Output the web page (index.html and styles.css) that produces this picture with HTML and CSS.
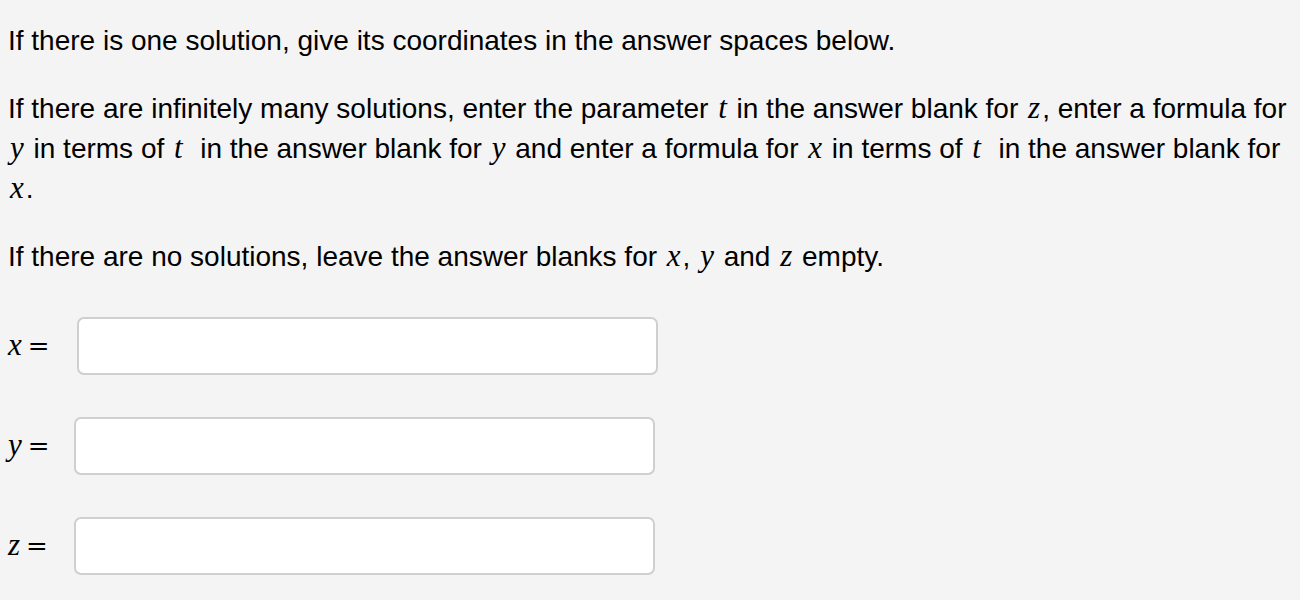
FILE: index.html
```html
<!DOCTYPE html>
<html>
<head>
<meta charset="utf-8">
<link rel="stylesheet" href="styles.css">
</head>
<body>
<div class="page">
  <p class="para">If there is one solution, give its coordinates in the answer spaces below.</p>
  <p class="para">If there are infinitely many solutions, enter the parameter <span class="m">t</span> in the answer blank for <span class="m">z</span>, enter a formula for <span class="m">y</span> in terms of <span class="m">t</span>&nbsp; in the answer blank for <span class="m">y</span> and enter a formula for <span class="m">x</span> in terms of <span class="m">t</span>&nbsp; in the answer blank for <span class="m">x</span>.</p>
  <p class="para">If there are no solutions, leave the answer blanks for <span class="m">x</span>, <span class="m">y</span> and <span class="m">z</span> empty.</p>
  <div class="answers">
    <div class="row"><span class="lbl"><span class="m">x</span><span class="eq">=</span></span><input class="box box-x" type="text"></div>
    <div class="row"><span class="lbl"><span class="m">y</span><span class="eq">=</span></span><input class="box" type="text"></div>
    <div class="row"><span class="lbl"><span class="m">z</span><span class="eq">=</span></span><input class="box" type="text"></div>
  </div>
</div>
</body>
</html>
```
FILE: styles.css
```css
html, body {
  margin: 0;
  padding: 0;
  background: #f4f4f4;
}
.page {
  padding: 21px 8px 0 8px;
  font-family: "Liberation Sans", Arial, sans-serif;
  font-size: 28px;
  line-height: 40px;
  color: #000;
}
.para {
  margin: 0 0 28px 0;
}
.m {
  font-family: "Liberation Serif", "Times New Roman", serif;
  font-style: italic;
  font-size: 31px;
  line-height: 0;
  padding: 0 2px;
}
.eq {
  font-family: "DejaVu Serif", "Liberation Serif", serif;
  font-size: 26px;
  line-height: 0;
  margin-left: 6px;
}
.lbl .m {
  padding: 0;
}
.answers {
  display: flex;
  flex-direction: column;
  gap: 42px;
  padding-top: 12px;
}
.row {
  display: flex;
  align-items: center;
}
.lbl {
  width: 66px;
  white-space: nowrap;
}
.box {
  box-sizing: border-box;
  width: 581px;
  height: 58px;
  margin: 0;
  background: #fff;
  border: 2px solid #cfcfcf;
  border-radius: 7px;
  outline: none;
}
.box-x {
  margin-left: 3px;
}
```
